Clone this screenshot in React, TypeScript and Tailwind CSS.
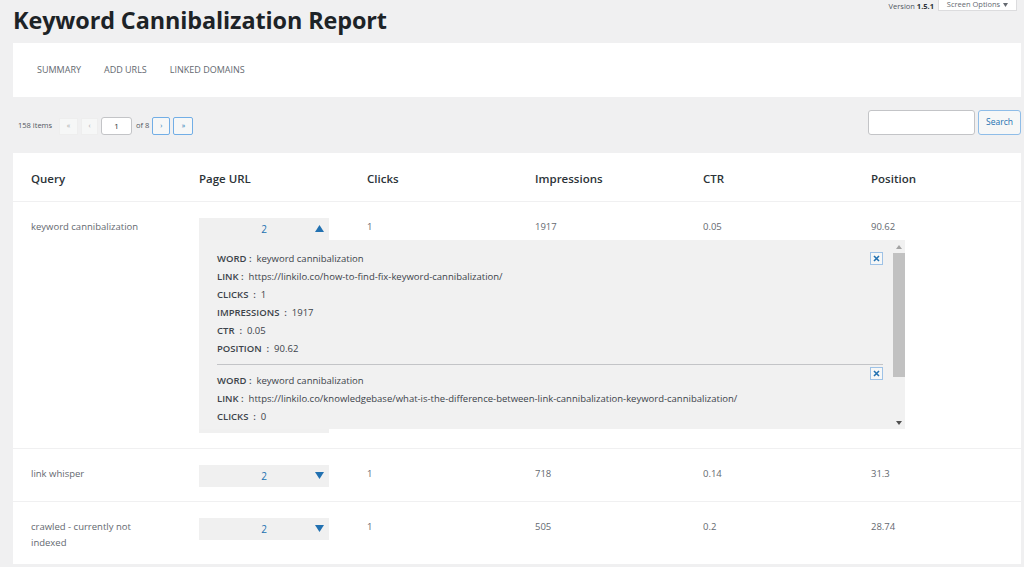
import React from "react";

const font = { fontFamily: '"Open Sans", "Noto Sans", sans-serif' };

function Tri({ up }: { up?: boolean }) {
  return (
    <svg width="9" height="7" viewBox="0 0 9 7" className="block">
      {up ? <path d="M0 7 L4.5 0 L9 7 Z" fill="#2271b1" /> : <path d="M0 0 L4.5 7 L9 0 Z" fill="#2271b1" />}
    </svg>
  );
}

function XBtn() {
  return (
    <div className="w-[13px] h-[13px] border border-[#9ec2e6] bg-[#f6f7f7] flex items-center justify-center">
      <svg width="7" height="7" viewBox="0 0 7 7">
        <path d="M1 1 L6 6 M6 1 L1 6" stroke="#2271b1" strokeWidth="1.6" />
      </svg>
    </div>
  );
}

function Line({ label, value }: { label: string; value: string }) {
  return (
    <div className="h-[18px] leading-[18px] text-[9.5px] text-[#3c434a] whitespace-pre">
      <span className="font-semibold">{label}</span>
      <span>{value}</span>
    </div>
  );
}

function Dropdown({ up }: { up?: boolean }) {
  return (
    <div className="w-[130px] h-[22px] bg-[#f0f0f0] relative flex items-center justify-center">
      <span className="text-[10px] text-[#2271b1]">2</span>
      <div className="absolute right-[5px] top-[7px]">
        <Tri up={up} />
      </div>
    </div>
  );
}

export default function App() {
  const cols = "grid grid-cols-[168px_168px_168px_168px_168px_168px]";
  const cell = "pl-[18px] pt-[1px] text-[9.5px] leading-[16px] text-[#646970]";
  return (
    <div style={font} className="w-[1024px] h-[567px] bg-[#f0f0f1] overflow-hidden relative">
      {/* top right */}
      <div className="absolute right-[7px] top-0 flex items-start gap-[4px]">
        <div className="text-[7.5px] text-[#50575e] pt-[1px]">
          Version <span className="font-bold text-[#2c3338]">1.5.1</span>
        </div>
        <div className="h-[11px] w-[79px] bg-white border border-[#dcdcde] border-t-0 flex items-center justify-center text-[7.5px] text-[#646970] leading-none gap-[3px]">
          <span>Screen Options</span>
          <svg width="5" height="4" viewBox="0 0 5 4"><path d="M0 0 L2.5 4 L5 0 Z" fill="#646970" /></svg>
        </div>
      </div>

      <div className="pl-[13px] pr-[3px]">
        <h1 className="text-[23.4px] font-bold text-[#1d2327] leading-none pt-[9px] h-[43px] tracking-[-0.1px]">
          Keyword Cannibalization Report
        </h1>

        {/* tabs */}
        <div className="bg-white h-[54px] flex items-center pl-[24px] gap-[23px] text-[9px] text-[#646970] uppercase">
          <span>Summary</span>
          <span>Add URLs</span>
          <span>Linked Domains</span>
        </div>

        {/* pagination */}
        <div className="h-[56px] flex items-center justify-between">
          <div className="flex items-center pl-[5px] pt-[2px] text-[7.5px] text-[#50575e]">
            <span className="mr-[7px]">158 items</span>
            <div className="w-[19px] h-[17px] bg-[#f6f7f7] border border-[#eeeeee] flex items-center justify-center text-[#a7aaad] text-[7px] mr-[3px]">«</div>
            <div className="w-[17px] h-[17px] bg-[#f6f7f7] border border-[#eeeeee] flex items-center justify-center text-[#a7aaad] text-[7px] mr-[3px]">‹</div>
            <div className="w-[31px] h-[18px] bg-white border border-[#c3c4c7] rounded-[3px] flex items-center justify-center text-[8px] text-[#2c3338] mr-[4px]">1</div>
            <span className="mr-[3px]">of 8</span>
            <div className="w-[18px] h-[18px] bg-[#f6f7f7] border border-[#72aee6] rounded-[2px] flex items-center justify-center text-[#2271b1] text-[7px] mr-[3px]">›</div>
            <div className="w-[20px] h-[18px] bg-[#f6f7f7] border border-[#72aee6] rounded-[2px] flex items-center justify-center text-[#2271b1] text-[7px]">»</div>
          </div>
          <div className="flex items-center gap-[3px] pb-[6px]">
            <div className="w-[107px] h-[25px] bg-white border border-[#c3c4c7] rounded-[3px]" />
            <div className="w-[43px] h-[25px] bg-[#f6f7f7] border border-[#8fbde8] rounded-[3px] flex items-center justify-center text-[8.5px] text-[#2271b1]">Search</div>
          </div>
        </div>

        {/* table */}
        <div className="bg-white w-[1008px]">
          <div className={`${cols} h-[49px] pt-[3px] items-center border-b border-[#f0f0f1]`}>
            {["Query", "Page URL", "Clicks", "Impressions", "CTR", "Position"].map((h) => (
              <div key={h} className="pl-[18px] text-[11.5px] font-semibold text-[#2c3338]">{h}</div>
            ))}
          </div>

          {/* row 1 */}
          <div className={`${cols} pt-[16px] pb-[15px] border-b border-[#f0f0f1]`}>
            <div className={cell}>keyword cannibalization</div>
            <div className="pl-[18px] relative">
              <div className="w-[130px] h-[215px] bg-[#f0f0f0]">
                <div className="h-[22px] relative flex items-center justify-center">
                  <span className="text-[10px] text-[#2271b1]">2</span>
                  <div className="absolute right-[5px] top-[7px]"><Tri up /></div>
                </div>
              </div>
              <div className="absolute left-[18px] top-[22px] w-[706px] h-[189px] bg-[#f1f1f1] overflow-hidden">
                <div className="pl-[18px] pr-[22px] pt-[10px]">
                  <div className="relative border-b border-[#c3c4c7] pb-[6px]">
                    <Line label="WORD :" value="  keyword cannibalization" />
                    <Line label="LINK :" value="  https://linkilo.co/how-to-find-fix-keyword-cannibalization/" />
                    <Line label="CLICKS  :" value="  1" />
                    <Line label="IMPRESSIONS  :" value="  1917" />
                    <Line label="CTR  :" value="  0.05" />
                    <Line label="POSITION  :" value="  90.62" />
                    <div className="absolute right-0 top-[2px]"><XBtn /></div>
                  </div>
                  <div className="relative pt-[7px]">
                    <Line label="WORD :" value="  keyword cannibalization" />
                    <Line label="LINK :" value="  https://linkilo.co/knowledgebase/what-is-the-difference-between-link-cannibalization-keyword-cannibalization/" />
                    <Line label="CLICKS  :" value="  0" />
                    <div className="absolute right-0 top-[2px]"><XBtn /></div>
                  </div>
                </div>
                {/* scrollbar */}
                <div className="absolute right-0 top-0 w-[12px] h-full bg-[#f1f1f1] flex flex-col items-center">
                  <svg width="6" height="4" viewBox="0 0 6 4" className="mt-[5px]"><path d="M0 4 L3 0 L6 4 Z" fill="#a3a3a3" /></svg>
                  <div className="w-[12px] h-[124px] bg-[#c1c1c1] mt-[4px]" />
                  <div className="flex-1" />
                  <svg width="6" height="4" viewBox="0 0 6 4" className="mb-[4px]"><path d="M0 0 L3 4 L6 0 Z" fill="#505050" /></svg>
                </div>
              </div>
            </div>
            <div className={cell}>1</div>
            <div className={cell}>1917</div>
            <div className={cell}>0.05</div>
            <div className={cell}>90.62</div>
          </div>

          {/* row 2 */}
          <div className={`${cols} pt-[16px] pb-[14px] border-b border-[#f0f0f1]`}>
            <div className={cell}>link whisper</div>
            <div className="pl-[18px]"><Dropdown /></div>
            <div className={cell}>1</div>
            <div className={cell}>718</div>
            <div className={cell}>0.14</div>
            <div className={cell}>31.3</div>
          </div>

          {/* row 3 */}
          <div className={`${cols} pt-[16px] pb-[13px] border-b border-[#f0f0f1]`}>
            <div className={`${cell} pr-[40px]`}>crawled - currently not indexed</div>
            <div className="pl-[18px]"><Dropdown /></div>
            <div className={cell}>1</div>
            <div className={cell}>505</div>
            <div className={cell}>0.2</div>
            <div className={cell}>28.74</div>
          </div>
        </div>
      </div>
    </div>
  );
}
